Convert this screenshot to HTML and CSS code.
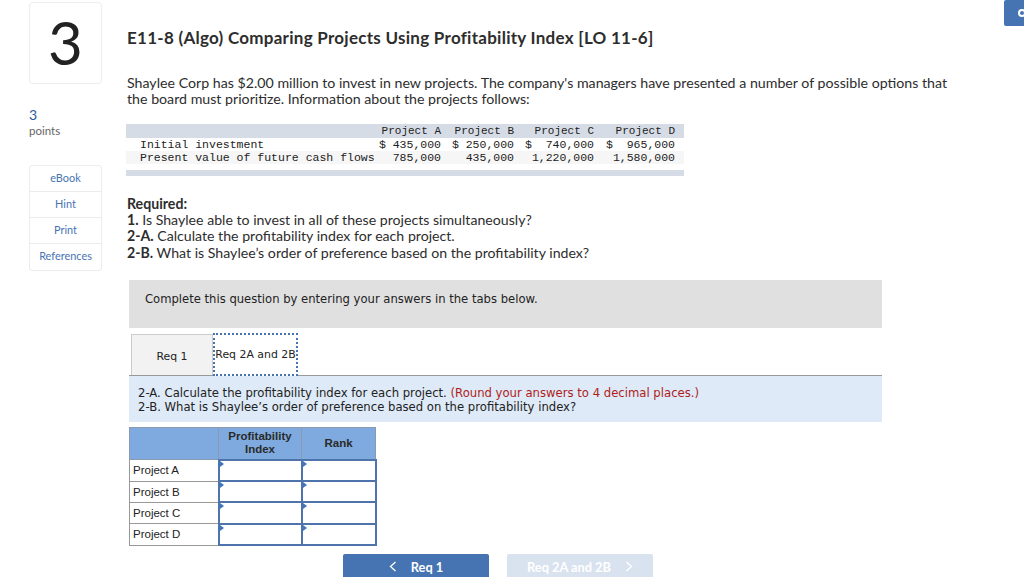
FILE: index.html
```html
<!DOCTYPE html>
<html lang="en">
<head>
    <meta charset="UTF-8">
    <meta name="viewport" content="width=device-width, initial-scale=1.0">
    <title>E11-8 (Algo) Comparing Projects Using Profitability Index</title>
    <link rel="stylesheet" href="styles.css">
</head>
<body>
    <a class="corner-tab" href="#"><span class="corner-ring"></span></a>
    <div class="page">
        <div class="sidebar">
            <div class="question-number">3</div>
            <div class="points-value">3</div>
            <div class="points-label">points</div>
            <div class="side-links">
                <a href="#">eBook</a>
                <a href="#">Hint</a>
                <a href="#">Print</a>
                <a href="#">References</a>
            </div>
        </div>
        <div class="content">
            <h1>E11-8 (Algo) Comparing Projects Using Profitability Index [LO 11-6]</h1>
            <p class="intro">Shaylee Corp has $2.00 million to invest in new projects. The company's managers have presented a number of possible options that the board must prioritize. Information about the projects follows:</p>
            <table class="data-table">
                <tr class="band">
                    <td class="label"></td>
                    <td>Project A</td>
                    <td>Project B</td>
                    <td>Project C</td>
                    <td>Project D</td>
                </tr>
                <tr>
                    <td class="label">Initial investment</td>
                    <td>$ 435,000</td>
                    <td>$ 250,000</td>
                    <td>$  740,000</td>
                    <td>$  965,000</td>
                </tr>
                <tr class="shade">
                    <td class="label">Present value of future cash flows</td>
                    <td>785,000</td>
                    <td>435,000</td>
                    <td>1,220,000</td>
                    <td>1,580,000</td>
                </tr>
            </table>
            <div class="table-foot"></div>
            <div class="required">
                <strong>Required:</strong><br>
                <strong>1.</strong> Is Shaylee able to invest in all of these projects simultaneously?<br>
                <strong>2-A.</strong> Calculate the profitability index for each project.<br>
                <strong>2-B.</strong> What is Shaylee’s order of preference based on the profitability index?
            </div>
            <div class="answer-area">
                <div class="instructions">Complete this question by entering your answers in the tabs below.</div>
                <div class="tabs">
                    <div class="tab">Req 1</div>
                    <div class="tab tab-active">Req 2A and 2B</div>
                </div>
                <div class="tab-note">
                    2-A. Calculate the profitability index for each project. <span class="note-red">(Round your answers to 4 decimal places.)</span><br>
                    2-B. What is Shaylee’s order of preference based on the profitability index?
                </div>
                <table class="answer-table">
                    <tr>
                        <th class="col-name"></th>
                        <th class="col-index">Profitability Index</th>
                        <th class="col-rank">Rank</th>
                    </tr>
                    <tr>
                        <td class="row-name">Project A</td>
                        <td class="cell-input"></td>
                        <td class="cell-input"></td>
                    </tr>
                    <tr>
                        <td class="row-name">Project B</td>
                        <td class="cell-input"></td>
                        <td class="cell-input"></td>
                    </tr>
                    <tr>
                        <td class="row-name">Project C</td>
                        <td class="cell-input"></td>
                        <td class="cell-input"></td>
                    </tr>
                    <tr>
                        <td class="row-name">Project D</td>
                        <td class="cell-input"></td>
                        <td class="cell-input"></td>
                    </tr>
                </table>
                <div class="pager">
                    <a class="pager-btn" href="#">
                        <svg width="8" height="11" viewBox="0 0 8 11"><path d="M6.5 1 L1.5 5.5 L6.5 10" fill="none" stroke="#fff" stroke-width="1.3"/></svg>
                        <span>Req 1</span>
                    </a>
                    <a class="pager-btn pager-off" href="#">
                        <span>Req 2A and 2B</span>
                        <svg width="8" height="11" viewBox="0 0 8 11"><path d="M1.5 1 L6.5 5.5 L1.5 10" fill="none" stroke="#fff" stroke-width="1.3"/></svg>
                    </a>
                </div>
            </div>
        </div>
    </div>
</body>
</html>
```

FILE: styles.css
```css
html, body {
    height: 577px;
    overflow: hidden;
}
body {
    margin: 0;
    background: #fff;
    color: #2d2d2d;
    font-family: Lato, "Open Sans", sans-serif;
}
.page {
    display: flex;
    padding-top: 2px;
    padding-left: 29px;
}
.corner-tab {
    position: absolute;
    top: 0;
    right: 0;
    width: 20px;
    height: 26px;
    background: #4674b3;
    border-radius: 2px 0 0 2px;
}
.corner-ring {
    position: absolute;
    left: 14px;
    top: 9px;
    width: 4px;
    height: 4px;
    border: 2px solid #fff;
    border-radius: 50%;
}
.sidebar {
    width: 73px;
    flex: none;
}
.question-number {
    height: 82px;
    border: 1px solid #ececec;
    border-radius: 4px;
    box-sizing: border-box;
    text-align: center;
    font-size: 60px;
    line-height: 78px;
    font-weight: 400;
    color: #222;
}
.points-value {
    margin-top: 23px;
    font-size: 14px;
    line-height: 16px;
    color: #2a5a9c;
}
.points-label {
    font-size: 11.5px;
    line-height: 15px;
    color: #666;
}
.side-links {
    margin-top: 27px;
    border: 1px solid #ececec;
    border-radius: 3px;
}
.side-links a {
    display: block;
    height: 26px;
    line-height: 24px;
    text-align: center;
    font-size: 10.9px;
    color: #4674b3;
    text-decoration: none;
    border-bottom: 1px solid #ececec;
    box-sizing: border-box;
}
.side-links a:last-child {
    border-bottom: none;
}
.content {
    margin-left: 25px;
    width: 830px;
}
h1 {
    margin: 26px 0 0;
    font-size: 17px;
    letter-spacing: 0.27px;
    line-height: 20px;
    font-weight: 700;
    white-space: nowrap;
}
.intro {
    margin: 27px 0 0;
    font-size: 14.2px;
    line-height: 16px;
}
.data-table {
    margin: 17px 0 0 -1px;
    width: 558px;
    table-layout: fixed;
    border-collapse: collapse;
    font-family: "Liberation Mono", monospace;
    font-size: 11.5px;
    line-height: 13px;
    color: #222;
}
.data-table td {
    padding: 0;
    text-align: right;
    white-space: pre;
}
.data-table td:nth-child(1) { width: 249px; }
.data-table td:nth-child(2) { width: 66px; }
.data-table td:nth-child(3) { width: 73px; }
.data-table td:nth-child(4) { width: 80px; }
.data-table td:nth-child(5) { width: 81px; padding-right: 9px; }
.data-table td.label {
    text-align: left;
    padding-left: 14px;
    box-sizing: border-box;
}
.band td {
    height: 14px;
    background: #d6dce5;
    font-size: 11px;
    vertical-align: bottom;
}
.shade td {
    background: #f6f6f6;
}
.table-foot {
    margin: 6px 0 0 -1px;
    width: 558px;
    height: 6px;
    background: #d6dce5;
}
.required {
    margin-top: 20px;
    font-size: 14.15px;
    line-height: 16.2px;
}
.answer-area {
    margin-top: 19px;
    margin-left: 2px;
    width: 753px;
}
.instructions {
    height: 48px;
    line-height: 39px;
    padding-left: 16px;
    background: #e0e0e0;
    font-family: "DejaVu Sans", sans-serif;
    font-size: 11.6px;
    color: #222;
}
.tabs {
    display: flex;
    margin-top: 6px;
    padding-left: 2px;
    height: 41px;
    border-bottom: 1px solid #999;
}
.tab {
    width: 82px;
    height: 41px;
    box-sizing: border-box;
    border: 1px solid #ccc;
    border-bottom: none;
    background: #f2f2f2;
    text-align: center;
    line-height: 43px;
    font-family: "DejaVu Sans", sans-serif;
    font-size: 10.9px;
    color: #222;
}
.tab-active {
    width: 85px;
    height: 43px;
    background: #fff;
    border: 2px dotted #4674b3;
    line-height: 40px;
    white-space: nowrap;
    position: relative;
    top: -1px;
}
.tab-note {
    height: 46px;
    box-sizing: border-box;
    padding: 10px 0 0 9px;
    background: #deeaf7;
    font-family: "DejaVu Sans", sans-serif;
    font-size: 11.65px;
    line-height: 14px;
    color: #222;
}
.note-red {
    color: #b01c1c;
}
.answer-table {
    margin-top: 5px;
    border-collapse: collapse;
    table-layout: fixed;
    width: 246px;
    font-family: "Liberation Sans", Arial, sans-serif;
    font-size: 11.5px;
    color: #222;
}
.answer-table th {
    height: 31px;
    padding: 0;
    background: #7eaadf;
    border: 1px solid #8a9bb0;
    line-height: 13px;
    font-size: 11.5px;
    font-weight: 700;
    color: #2a2a2a;
}
.col-name { width: 88px; }
.col-index { width: 82px; }
.col-rank { width: 73px; }
.answer-table td {
    height: 19.3px;
    padding: 0;
}
.row-name {
    padding-left: 3px !important;
    border: 1px solid #999;
}
.cell-input {
    position: relative;
    border: 2px solid #4f74ab;
}
.cell-input::before {
    content: "";
    position: absolute;
    left: 0;
    top: 0;
    border-left: 4px solid #3f76c0;
    border-top: 3px solid transparent;
    border-bottom: 3px solid transparent;
}
.pager {
    display: flex;
    gap: 18px;
    margin-top: 8px;
    margin-left: 214px;
}
.pager-btn {
    display: flex;
    align-items: center;
    justify-content: center;
    gap: 14px;
    width: 146px;
    height: 30px;
    padding-bottom: 5px;
    box-sizing: border-box;
    border-radius: 2px;
    background: #4674b3;
    color: #fff;
    font-family: Lato, sans-serif;
    font-size: 12.8px;
    font-weight: 700;
    text-decoration: none;
}
.pager-off {
    background: #d9e3f0;
}
```
